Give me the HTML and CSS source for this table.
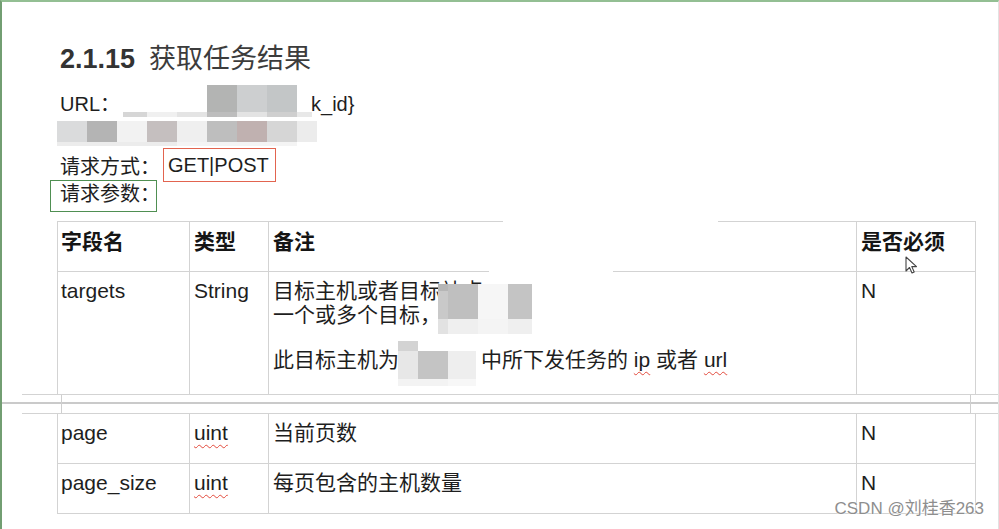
FILE: index.html
```html
<!DOCTYPE html>
<html lang="zh-CN">
<head>
    <meta charset="UTF-8">
    <meta name="viewport" content="width=device-width, initial-scale=1.0">
    <title>2.1.15 获取任务结果</title>
    <link rel="stylesheet" href="styles.css">
</head>
<body>
    <div class="page">
        <h2 class="title"><span class="title-num">2.1.15</span><span class="title-text">获取任务结果</span></h2>

        <div class="line url-line">URL：<span class="url-gap"></span>k_id}</div>
        <div class="blur-line"></div>

        <div class="line method-line">请求方式：<span class="box-red">GET|POST</span></div>
        <div class="line params-line"><span class="box-green">请求参数：</span></div>

        <div class="table-wrap">
            <table class="params">
                <colgroup>
                    <col class="c1"><col class="c2"><col class="c3"><col class="c4">
                </colgroup>
                <tr class="head">
                    <th>字段名</th>
                    <th>类型</th>
                    <th>备注</th>
                    <th>是否必须</th>
                </tr>
                <tr class="tall">
                    <td>targets</td>
                    <td>String</td>
                    <td>
                        <div class="note">
                            <p>目标主机或者目标站点<br>一个或多个目标，</p>
                            <p class="note-last">此目标主机为<span class="note-gap"></span>中所下发任务的 <span class="typo">ip</span> 或者 <span class="typo">url</span></p>
                            <div class="blur blur-a"></div>
                            <div class="blur blur-b"></div>
                        </div>
                    </td>
                    <td>N</td>
                </tr>
            </table>
            <div class="wipe wipe-top"></div>
            <div class="wipe wipe-bottom"></div>
            <svg class="cursor" width="13" height="19" viewBox="0 0 13 19">
                <path d="M1 1 L1 15 L4.5 11.5 L7 17 L9.2 16 L6.8 10.6 L11.5 10.6 Z" fill="#fff" stroke="#444" stroke-width="1.1" stroke-linejoin="round"/>
            </svg>
        </div>

        <div class="break"><div class="break-mid"></div></div>

        <table class="params params-2">
            <colgroup>
                <col class="c1"><col class="c2"><col class="c3"><col class="c4">
            </colgroup>
            <tr>
                <td>page</td>
                <td><span class="typo">uint</span></td>
                <td>当前页数</td>
                <td>N</td>
            </tr>
            <tr>
                <td>page_size</td>
                <td><span class="typo">uint</span></td>
                <td>每页包含的主机数量</td>
                <td>N</td>
            </tr>
        </table>

        <div class="blur blur-url-top"></div>
        <div class="blur blur-url-strip"></div>
        <div class="watermark">CSDN @刘桂香263</div>
    </div>
</body>
</html>
```

FILE: styles.css
```css
body {
    margin: 0;
    background: #fff;
}
.page {
    position: relative;
    width: 999px;
    height: 529px;
    box-sizing: border-box;
    overflow: hidden;
    background: #fff;
    border-top: 2px solid #93bf93;
    border-left: 2px solid #729e72;
    border-right: 1px solid #e2e2e2;
    padding-top: 39px;
    font-family: "Liberation Sans", "Noto Sans CJK SC", sans-serif;
    color: #1e1e1e;
}
.title {
    margin: 0 0 0 58px;
    height: 32px;
    line-height: 32px;
    font-weight: normal;
    white-space: nowrap;
}
.title-num {
    font-size: 27px;
    font-weight: bold;
    color: #333;
}
.title-text {
    margin-left: 14px;
    font-family: "Noto Sans CJK SC", sans-serif;
    font-size: 27px;
    color: #3c3c3c;
}
.line {
    font-size: 20px;
    white-space: nowrap;
}
.url-line {
    margin: 16px 0 0 58px;
    height: 30px;
    line-height: 30px;
}
.url-gap {
    display: inline-block;
    width: 191px;
}
.blur-line {
    margin: 2px 0 2px 55px;
    width: 260px;
    height: 25px;
    background:
        linear-gradient(to right, #dadbdc 0 30px, #b4b4b4 30px 60px, #f2f2f2 60px 90px, #c5bfbf 90px 120px, #efefef 120px 150px, #bebebe 150px 180px, #c0b1b0 180px 210px, #d6d6d6 210px 240px, #ececec 240px) 0 0 / 260px 21px no-repeat,
        linear-gradient(to right, #ececec 0 120px, #f4f4f4 120px) 0 21px / 240px 4px no-repeat;
}
.method-line {
    display: flex;
    align-items: center;
    margin-left: 58px;
    height: 34px;
}
.box-red {
    display: inline-block;
    box-sizing: border-box;
    height: 34px;
    line-height: 32px;
    margin-left: 3px;
    padding: 0 6px 0 4px;
    border: 1.5px solid #e2644f;
}
.params-line {
    margin: -2px 0 0 48px;
    height: 32px;
}
.box-green {
    display: inline-block;
    box-sizing: border-box;
    width: 107px;
    height: 32px;
    line-height: 27px;
    padding-left: 9px;
    border: 1.5px solid #4f8f52;
    overflow: visible;
}
.table-wrap {
    position: relative;
    margin: 9px 0 0 55px;
    width: 918px;
}
.params {
    border-collapse: collapse;
    table-layout: fixed;
    width: 918px;
    font-size: 21px;
    line-height: 24px;
}
.params-2 {
    margin: -1px 0 0 55px;
}
.c1 { width: 132px; }
.c2 { width: 79px; }
.c3 { width: 588px; }
.c4 { width: 119px; }
.params th,
.params td {
    border: 1px solid #d3d3d3;
    padding: 7px 4px 0 4px;
    text-align: left;
    vertical-align: top;
    white-space: nowrap;
}
.params th:first-child,
.params td:first-child {
    padding-left: 3px;
}
.params th {
    font-family: "Noto Sans CJK SC", sans-serif;
    font-weight: bold;
    color: #151515;
    padding-top: 6px;
}
.head { height: 50px; }
.tall { height: 123px; }
.params-2 tr { height: 50px; }
.params-2 td { padding-top: 7px; }
.note {
    position: relative;
}
.note p {
    margin: 0;
}
.note-last {
    margin-top: 21px !important;
}
.note-gap {
    display: inline-block;
    width: 82px;
}
.typo {
    text-decoration: underline wavy #e24a3c;
    text-decoration-thickness: 1px;
    text-underline-offset: 4px;
}
.blur {
    position: absolute;
}
.blur-a {
    left: 165px;
    top: 5px;
    width: 94px;
    height: 50px;
    background:
        linear-gradient(to bottom, #b6b6b6 0 7px, transparent 7px) 0 0 / 10px 35px no-repeat,
        linear-gradient(to right, #c9c9c9 0 10px, #bfbfbf 10px 40px, #f6f6f6 40px 70px, #c4c4c4 70px) 0 0 / 94px 35px no-repeat,
        linear-gradient(to right, #e2e2e2 0 10px, #efefef 10px 40px, #f4f4f4 40px 70px, #efefef 70px) 0 35px / 94px 15px no-repeat;
}
.blur-b {
    left: 125px;
    top: 62px;
    width: 78px;
    height: 45px;
    background:
        linear-gradient(#d3d3d3, #d3d3d3) 0 0 / 20px 10px no-repeat,
        linear-gradient(to right, #e7e7e7 0 20px, #c4c4c4 20px 50px, #eeeeee 50px) 0 10px / 78px 28px no-repeat,
        linear-gradient(to right, #f3f3f3 0 50px, #f7f7f7 50px) 0 38px / 78px 7px no-repeat;
}
.blur-url-top {
    left: 205px;
    top: 83px;
    width: 90px;
    height: 27px;
    background: linear-gradient(to right, #b3b4b3 0 30px, #cdcfd0 30px 60px, #c3c6c7 60px);
}
.blur-url-strip {
    left: 121px;
    top: 110px;
    width: 189px;
    height: 5px;
    background: linear-gradient(to right, #d6d6d6 0 24px, #f0f0f0 24px 54px, #e4e4e4 54px 84px, #bdbdbd 84px 114px, #e3e3e3 114px 144px, #cfcfcf 144px 174px, #e8e8e8 174px);
}
.wipe {
    position: absolute;
    height: 3px;
    background: #fff;
}
.wipe-top { left: 446px; top: -1px; width: 215px; }
.wipe-bottom { left: 432px; top: 48px; width: 124px; }
.cursor {
    position: absolute;
    left: 848px;
    top: 35px;
}
.break {
    position: relative;
    box-sizing: border-box;
    margin: -1px 0 0 20px;
    height: 20px;
    border-top: 1px solid #d3d3d3;
    border-bottom: 1px solid #d3d3d3;
}
.break::before,
.break::after {
    content: "";
    position: absolute;
    top: 0;
    bottom: 0;
    width: 1px;
    background: #cfcfcf;
}
.break::before { left: 39px; }
.break::after { left: 948px; }
.break-mid {
    margin: 7px 0 0 -20px;
    height: 2px;
    background: #cacaca;
}
.watermark {
    position: absolute;
    right: 14px;
    bottom: 10px;
    font-size: 17px;
    color: #8e8e8e;
    text-shadow: 0 0 2px #fff, 0 0 1px #fff;
    white-space: nowrap;
}
```
